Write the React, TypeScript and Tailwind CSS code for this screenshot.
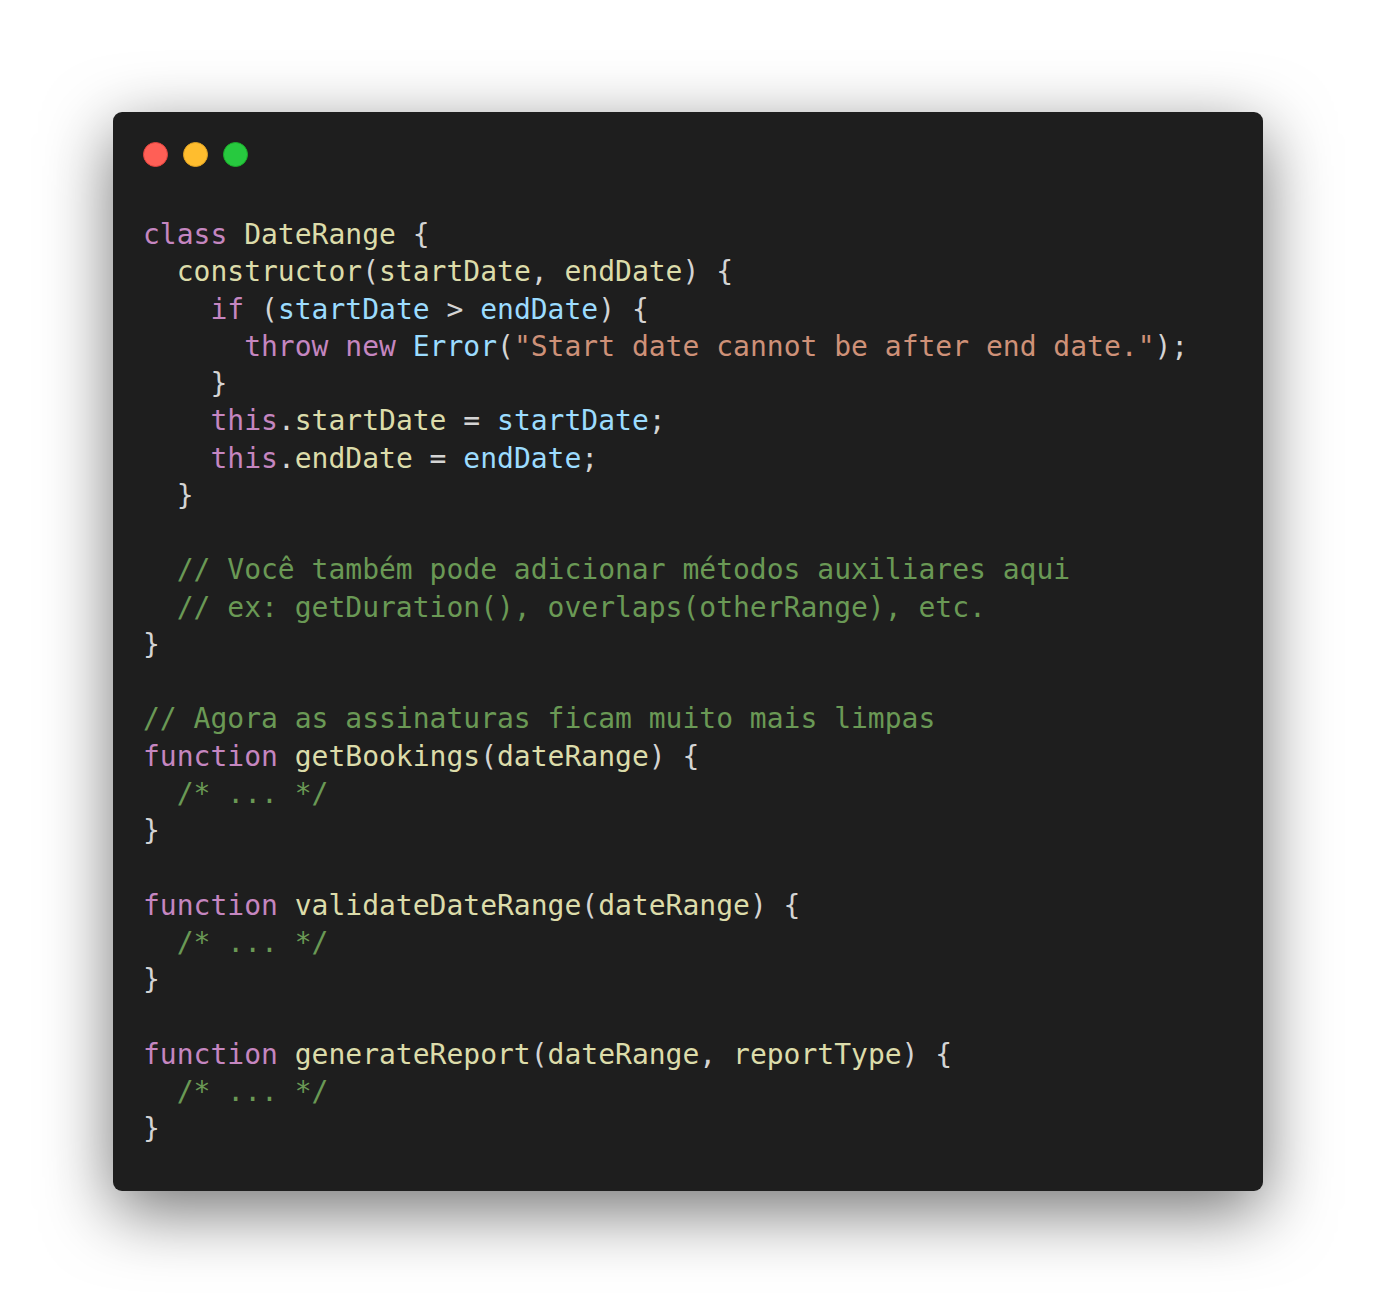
import React from "react";

// VS Code Dark+ palette
const KW = "text-[#c586c0]";
const FN = "text-[#dcdcaa]";
const VAR = "text-[#9cdcfe]";
const STR = "text-[#ce9178]";
const CM = "text-[#6a9955]";

const K = ({ c }: { c: string }) => <span className={KW}>{c}</span>;
const F = ({ c }: { c: string }) => <span className={FN}>{c}</span>;
const V = ({ c }: { c: string }) => <span className={VAR}>{c}</span>;
const S = ({ c }: { c: string }) => <span className={STR}>{c}</span>;
const C = ({ c }: { c: string }) => <span className={CM}>{c}</span>;

const Line = ({ children }: { children?: React.ReactNode }) => (
  <div className="h-[37.25px]">{children}</div>
);

const App = () => {
  return (
    <div className="min-h-screen bg-white pl-[113px] pt-[112px] pb-[113px]">
      {/* Window */}
      <div className="w-[1150px] h-[1079px] bg-[#1e1e1e] rounded-[9px] shadow-[0_20px_68px_rgba(0,0,0,0.55)] pt-[30px] px-[30px]">
        {/* Traffic lights */}
        <div className="flex gap-[15px]">
          <div className="w-[25px] h-[25px] rounded-full bg-[#ff5f56] border border-[#e0443e]" />
          <div className="w-[25px] h-[25px] rounded-full bg-[#ffbd2e] border border-[#dea123]" />
          <div className="w-[25px] h-[25px] rounded-full bg-[#27c93f] border border-[#1aab29]" />
        </div>

        {/* Code */}
        <pre className="mt-[49px] whitespace-pre text-[28px] leading-[37.25px] text-[#d4d4d4] font-['DejaVu_Sans_Mono','Liberation_Mono',monospace]">
          <Line>
            <K c="class" /> <F c="DateRange" /> {"{"}
          </Line>
          <Line>
            {"  "}
            <F c="constructor" />(<F c="startDate" />, <F c="endDate" />) {"{"}
          </Line>
          <Line>
            {"    "}
            <K c="if" /> (<V c="startDate" /> {">"} <V c="endDate" />) {"{"}
          </Line>
          <Line>
            {"      "}
            <K c="throw" /> <K c="new" /> <V c="Error" />(
            <S c={'"Start date cannot be after end date."'} />
            );
          </Line>
          <Line>{"    }"}</Line>
          <Line>
            {"    "}
            <K c="this" />.<F c="startDate" /> = <V c="startDate" />;
          </Line>
          <Line>
            {"    "}
            <K c="this" />.<F c="endDate" /> = <V c="endDate" />;
          </Line>
          <Line>{"  }"}</Line>
          <Line />
          <Line>
            {"  "}
            <C c="// Você também pode adicionar métodos auxiliares aqui" />
          </Line>
          <Line>
            {"  "}
            <C c="// ex: getDuration(), overlaps(otherRange), etc." />
          </Line>
          <Line>{"}"}</Line>
          <Line />
          <Line>
            <C c="// Agora as assinaturas ficam muito mais limpas" />
          </Line>
          <Line>
            <K c="function" /> <F c="getBookings" />(<F c="dateRange" />) {"{"}
          </Line>
          <Line>
            {"  "}
            <C c="/* ... */" />
          </Line>
          <Line>{"}"}</Line>
          <Line />
          <Line>
            <K c="function" /> <F c="validateDateRange" />(<F c="dateRange" />){" "}
            {"{"}
          </Line>
          <Line>
            {"  "}
            <C c="/* ... */" />
          </Line>
          <Line>{"}"}</Line>
          <Line />
          <Line>
            <K c="function" /> <F c="generateReport" />(<F c="dateRange" />,{" "}
            <F c="reportType" />) {"{"}
          </Line>
          <Line>
            {"  "}
            <C c="/* ... */" />
          </Line>
          <Line>{"}"}</Line>
        </pre>
      </div>
    </div>
  );
};

export default App;
